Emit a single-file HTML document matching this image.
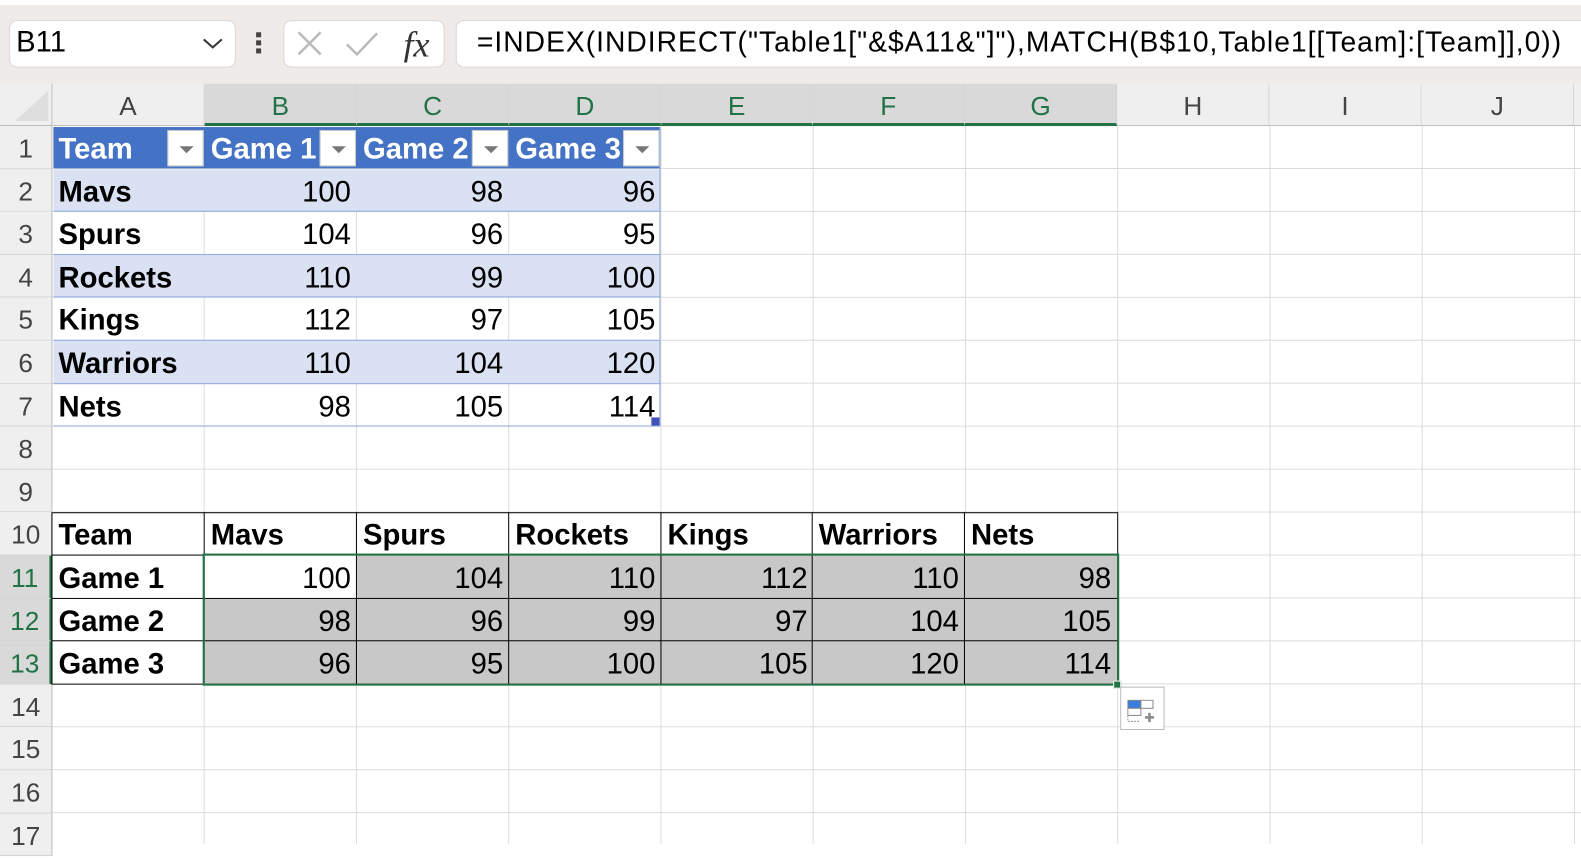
<!DOCTYPE html>
<html><head><meta charset="utf-8"><style>
*{margin:0;padding:0;box-sizing:border-box}
body{width:1581px;height:837px;overflow:hidden;background:#fff;font-family:"Liberation Sans",Calibri,sans-serif;position:relative}
#w{position:absolute;left:0;top:0;width:1581px;height:837px;transform:scale(1.0083);transform-origin:0 0}
.a{position:absolute}
.top{left:0;top:0;width:1581px;height:83px;background:#efebe9}
.box{background:#fff;border:1px solid #dcd8d6;border-radius:8px}
.ch{top:83px;height:42px;background:#efefef;border-right:1px solid #d4d4d4;border-bottom:1px solid #bdbdbd;font-size:26px;color:#444;text-align:center;line-height:44px}
.chs{background:#d9d9d9;color:#217346;border-bottom:3px solid #217346}
.rh{left:0;width:52px;background:#efefef;border-bottom:1px solid #d4d4d4;border-right:1px solid #bdbdbd;font-size:26px;color:#444;text-align:center;line-height:44px;height:42.6px}
.rhs{background:#d9d9d9;color:#217346;border-right:3px solid #217346}
.grid{left:52px;top:125px;width:1529px;height:712px;
background-image:linear-gradient(to right,#dcdcdc 1px,transparent 1px),linear-gradient(to bottom,#dcdcdc 1px,transparent 1px);
background-size:151px 100%,100% 42.6px;background-position:150px 0,0 41.6px}
.c{height:42.6px;width:151px;font-size:29px;line-height:46px;padding:0 6px;color:#000;white-space:nowrap;overflow:visible}
.r{text-align:right}
.b{font-weight:bold}
.dd{width:36px;height:36px;background:#fff;border:1px solid #c8c8c8;top:129px}
.dd:after{content:"";position:absolute;left:11px;top:15px;border-left:7px solid transparent;border-right:7px solid transparent;border-top:7px solid #777}
.blu{background:#d9e1f2}
.gr{background:#c8c8c8}
</style></head><body><div id="w">
<div class="a top"></div>
<div class="a" style="left:0;top:0;width:1581px;height:5px;background:#fff"></div>
<div class="a box" style="left:9px;top:20px;width:225px;height:47px"></div>
<div class="a" style="left:16px;top:26px;font-size:29px;color:#000">B11</div>
<svg class="a" style="left:200px;top:36px" width="22" height="14"><path d="M2 3 L11 11 L20 3" stroke="#333" stroke-width="2" fill="none"/></svg>
<div class="a" style="left:254px;top:32px;width:5px;height:5px;background:#444"></div>
<div class="a" style="left:254px;top:40px;width:5px;height:5px;background:#444"></div>
<div class="a" style="left:254px;top:48px;width:5px;height:5px;background:#444"></div>
<div class="a box" style="left:281px;top:20px;width:160px;height:47px"></div>
<svg class="a" style="left:292px;top:28px" width="145" height="34"><path d="M4 4 L26 26 M26 4 L4 26" stroke="#bbb" stroke-width="2.5"/><path d="M52 16 L62 26 L82 5" stroke="#bbb" stroke-width="2.5" fill="none"/><text x="108" y="28" font-family="Liberation Serif,serif" font-style="italic" font-size="36" fill="#333">fx</text></svg>
<div class="a box" style="left:452px;top:20px;width:1140px;height:47px"></div>
<div class="a" style="left:473px;top:26px;font-size:28px;color:#000;letter-spacing:1px;white-space:nowrap">=INDEX(INDIRECT("Table1["&amp;$A11&amp;"]"),MATCH(B$10,Table1[[Team]:[Team]],0))</div>

<div class="a grid"></div>
<div class="a" style="left:0;top:83px;width:52px;height:42px;background:#efefef;border-right:1px solid #bdbdbd;border-bottom:1px solid #bdbdbd"></div>
<svg class="a" style="left:13px;top:88px" width="36" height="34"><path d="M35 2 L35 32 L2 32 Z" fill="#dedede"/></svg>
<div class="a ch" style="left:52px;width:151px">A</div>
<div class="a ch chs" style="left:203px;width:151px">B</div>
<div class="a ch chs" style="left:354px;width:151px">C</div>
<div class="a ch chs" style="left:505px;width:151px">D</div>
<div class="a ch chs" style="left:656px;width:150px">E</div>
<div class="a ch chs" style="left:806px;width:151px">F</div>
<div class="a ch chs" style="left:957px;width:151px">G</div>
<div class="a ch" style="left:1108px;width:151px">H</div>
<div class="a ch" style="left:1259px;width:151px">I</div>
<div class="a ch" style="left:1410px;width:151px">J</div>
<div class="a ch" style="left:1561px;width:30px"></div>
<div class="a rh" style="top:125px">1</div>
<div class="a rh" style="top:167.6px">2</div>
<div class="a rh" style="top:210.2px">3</div>
<div class="a rh" style="top:252.8px">4</div>
<div class="a rh" style="top:295.4px">5</div>
<div class="a rh" style="top:338px">6</div>
<div class="a rh" style="top:380.6px">7</div>
<div class="a rh" style="top:423.2px">8</div>
<div class="a rh" style="top:465.8px">9</div>
<div class="a rh" style="top:508.4px">10</div>
<div class="a rh rhs" style="top:551px">11</div>
<div class="a rh rhs" style="top:593.6px">12</div>
<div class="a rh rhs" style="top:636.2px">13</div>
<div class="a rh" style="top:678.8px">14</div>
<div class="a rh" style="top:721.4px">15</div>
<div class="a rh" style="top:764px">16</div>
<div class="a rh" style="top:806.6px">17</div>

<div class="a" style="left:53px;top:126px;width:602px;height:41px;background:#4472c4"></div>
<div class="a blu" style="left:53px;top:167.6px;width:602px;height:42.6px"></div>
<div class="a blu" style="left:53px;top:252.8px;width:602px;height:42.6px"></div>
<div class="a blu" style="left:53px;top:338px;width:602px;height:42.6px"></div>
<div class="a" style="left:53px;top:209.2px;width:602px;height:1px;background:#8ea9db"></div>
<div class="a" style="left:53px;top:251.8px;width:602px;height:1px;background:#8ea9db"></div>
<div class="a" style="left:53px;top:294.4px;width:602px;height:1px;background:#8ea9db"></div>
<div class="a" style="left:53px;top:337px;width:602px;height:1px;background:#8ea9db"></div>
<div class="a" style="left:53px;top:379.6px;width:602px;height:1px;background:#8ea9db"></div>
<div class="a" style="left:53px;top:422.2px;width:602px;height:1px;background:#8ea9db"></div>
<div class="a" style="left:654px;top:126px;width:1px;height:297px;background:#8ea9db"></div>
<div class="a" style="left:646px;top:414px;width:8px;height:8px;background:#3f51b5"></div>

<div class="a c b" style="left:52px;top:125px;color:#fff">Team</div>
<div class="a c b" style="left:203px;top:125px;color:#fff">Game 1</div>
<div class="a c b" style="left:354px;top:125px;color:#fff">Game 2</div>
<div class="a c b" style="left:505px;top:125px;color:#fff">Game 3</div>
<div class="a dd" style="left:166px"></div>
<div class="a dd" style="left:317px"></div>
<div class="a dd" style="left:468px"></div>
<div class="a dd" style="left:618px"></div>

<div class="a c b" style="left:52px;top:167.6px">Mavs</div><div class="a c r" style="left:203px;top:167.6px">100</div><div class="a c r" style="left:354px;top:167.6px">98</div><div class="a c r" style="left:505px;top:167.6px">96</div>
<div class="a c b" style="left:52px;top:210.2px">Spurs</div><div class="a c r" style="left:203px;top:210.2px">104</div><div class="a c r" style="left:354px;top:210.2px">96</div><div class="a c r" style="left:505px;top:210.2px">95</div>
<div class="a c b" style="left:52px;top:252.8px">Rockets</div><div class="a c r" style="left:203px;top:252.8px">110</div><div class="a c r" style="left:354px;top:252.8px">99</div><div class="a c r" style="left:505px;top:252.8px">100</div>
<div class="a c b" style="left:52px;top:295.4px">Kings</div><div class="a c r" style="left:203px;top:295.4px">112</div><div class="a c r" style="left:354px;top:295.4px">97</div><div class="a c r" style="left:505px;top:295.4px">105</div>
<div class="a c b" style="left:52px;top:338px">Warriors</div><div class="a c r" style="left:203px;top:338px">110</div><div class="a c r" style="left:354px;top:338px">104</div><div class="a c r" style="left:505px;top:338px">120</div>
<div class="a c b" style="left:52px;top:380.6px">Nets</div><div class="a c r" style="left:203px;top:380.6px">98</div><div class="a c r" style="left:354px;top:380.6px">105</div><div class="a c r" style="left:505px;top:380.6px">114</div>

<div class="a" style="left:52px;top:508px;width:1057px;height:171px;background:#fff"></div>
<div class="a gr" style="left:354px;top:551px;width:754px;height:128px"></div>
<div class="a gr" style="left:203px;top:593.6px;width:151px;height:85px"></div>
<div class="a" style="left:51px;top:507.5px;width:1058px;height:171px;border:1px solid #000"></div>
<div class="a" style="left:51px;top:550px;width:1058px;height:1px;background:#000"></div>
<div class="a" style="left:51px;top:592.6px;width:1058px;height:1px;background:#000"></div>
<div class="a" style="left:51px;top:635.2px;width:1058px;height:1px;background:#000"></div>
<div class="a" style="left:202px;top:508px;width:1px;height:171px;background:#000"></div>
<div class="a" style="left:353px;top:508px;width:1px;height:171px;background:#000"></div>
<div class="a" style="left:504px;top:508px;width:1px;height:171px;background:#000"></div>
<div class="a" style="left:655px;top:508px;width:1px;height:171px;background:#000"></div>
<div class="a" style="left:805px;top:508px;width:1px;height:171px;background:#000"></div>
<div class="a" style="left:956px;top:508px;width:1px;height:171px;background:#000"></div>
<div class="a" style="left:201px;top:549px;width:909px;height:131px;border:2px solid #217346"></div>
<div class="a" style="left:1104px;top:675px;width:8px;height:8px;background:#217346;border:1px solid #fff"></div>

<div class="a c b" style="left:52px;top:508.4px">Team</div>
<div class="a c b" style="left:203px;top:508.4px">Mavs</div>
<div class="a c b" style="left:354px;top:508.4px">Spurs</div>
<div class="a c b" style="left:505px;top:508.4px">Rockets</div>
<div class="a c b" style="left:656px;top:508.4px">Kings</div>
<div class="a c b" style="left:806px;top:508.4px">Warriors</div>
<div class="a c b" style="left:957px;top:508.4px">Nets</div>

<div class="a c b" style="left:52px;top:551px">Game 1</div><div class="a c r" style="left:203px;top:551px">100</div><div class="a c r" style="left:354px;top:551px">104</div><div class="a c r" style="left:505px;top:551px">110</div><div class="a c r" style="left:656px;top:551px">112</div><div class="a c r" style="left:806px;top:551px">110</div><div class="a c r" style="left:957px;top:551px">98</div>
<div class="a c b" style="left:52px;top:593.6px">Game 2</div><div class="a c r" style="left:203px;top:593.6px">98</div><div class="a c r" style="left:354px;top:593.6px">96</div><div class="a c r" style="left:505px;top:593.6px">99</div><div class="a c r" style="left:656px;top:593.6px">97</div><div class="a c r" style="left:806px;top:593.6px">104</div><div class="a c r" style="left:957px;top:593.6px">105</div>
<div class="a c b" style="left:52px;top:636.2px">Game 3</div><div class="a c r" style="left:203px;top:636.2px">96</div><div class="a c r" style="left:354px;top:636.2px">95</div><div class="a c r" style="left:505px;top:636.2px">100</div><div class="a c r" style="left:656px;top:636.2px">105</div><div class="a c r" style="left:806px;top:636.2px">120</div><div class="a c r" style="left:957px;top:636.2px">114</div>

<div class="a" style="left:1111px;top:681px;width:44px;height:43px;background:#fff;border:1px solid #bbb"></div>
<svg class="a" style="left:1118px;top:694px" width="30" height="26"><rect x="0.5" y="0.5" width="13" height="8" fill="#3b7ddd" stroke="#888"/><rect x="13.5" y="0.5" width="12" height="8" fill="#fff" stroke="#888"/><rect x="0.5" y="8.5" width="13" height="7" fill="#fff" stroke="#888"/><path d="M0.5 16 V21.5 H13" stroke="#888" stroke-dasharray="1.5 1.5" fill="none"/><path d="M22 13 V22 M17.5 17.5 H26.5" stroke="#888" stroke-width="2.5"/></svg>
</div></body></html>
